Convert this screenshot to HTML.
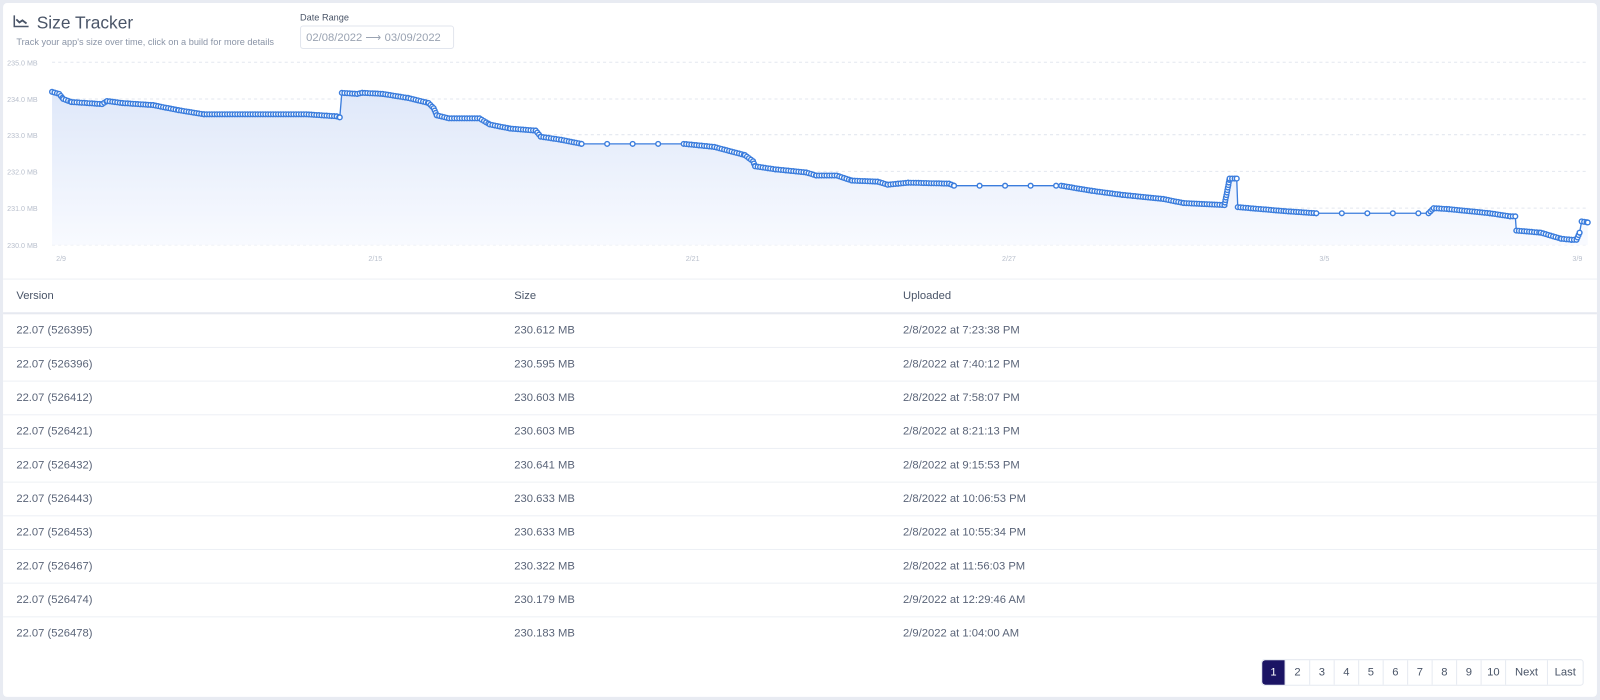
<!DOCTYPE html>
<html><head><meta charset="utf-8"><style>
body{margin:0;background:#e8ebf2;font-family:"Liberation Sans",sans-serif;width:1600px;height:700px;overflow:hidden}
#wrap{position:absolute;left:0;top:0;width:1568px;height:686px;transform:scale(1.0204);transform-origin:0 0}
.card{position:absolute;left:3px;top:3px;width:1562px;height:680px;background:#fff;border-radius:4px}
.title{position:absolute;left:33px;top:10px;font-size:17px;color:#4a5568}
.sub{position:absolute;left:13px;top:33px;font-size:9px;color:#8a94a6}
.dr{position:absolute;left:291px;top:9px;font-size:9px;color:#4a5568}
.inp{position:absolute;left:291px;top:22px;width:151px;height:23px;border:1px solid #e2e6ee;border-radius:3px;font-size:11px;color:#9aa3b2;line-height:22px;box-sizing:border-box;padding-left:5px;white-space:nowrap;overflow:hidden}
.tbl{position:absolute;left:3px;top:273px;width:1562px}
.row{height:32px;border-bottom:1px solid #edf0f5;position:relative;font-size:11px;color:#5a6478}
.row span{position:absolute;top:10px}
.hd{height:32px;border-top:1px solid #edf0f5;border-bottom:2px solid #e6e9f0;color:#4a5568}
.pg{position:absolute;top:646px;left:1236px;display:flex;border:1px solid #e6eaf1;border-radius:3px;font-size:11px;color:#4a5568}
.pg div{height:24px;line-height:24px;text-align:center;border-left:1px solid #e6eaf1;width:23px}
.pg div:first-child{border:none;background:#1b1464;color:#fff;width:22px;border-radius:3px 0 0 3px}
</style></head><body>
<div id="wrap">
<div class="card">
<svg style="position:absolute;left:10px;top:12px" width="16" height="12" viewBox="0 0 16 12"><path d="M1 0V11H15" stroke="#4a5568" stroke-width="1.5" fill="none"/><path d="M3 4L6 7L9 5L13 8" stroke="#4a5568" stroke-width="1.8" fill="none"/></svg>
<div class="title">Size Tracker</div>
<div class="sub">Track your app's size over time, click on a build for more details</div>
<div class="dr">Date Range</div>
<div class="inp">02/08/2022 ⟶ 03/09/2022</div>
</div>
<svg id="ch" style="position:absolute;left:0;top:0" width="1568" height="270">
<defs><linearGradient id="g" x1="0" y1="0" x2="0" y2="1"><stop offset="0" stop-color="#dfe8f9"/><stop offset="1" stop-color="#f8faff"/></linearGradient></defs>
<g font-size="7" fill="#b8bfcc" font-family="Liberation Sans">
<text x="7" y="64">235.0 MB</text><text x="7" y="100">234.0 MB</text><text x="7" y="135">233.0 MB</text><text x="7" y="171">232.0 MB</text><text x="7" y="207">231.0 MB</text><text x="7" y="243">230.0 MB</text>
<text x="55" y="256">2/9</text><text x="361" y="256">2/15</text><text x="672" y="256">2/21</text><text x="982" y="256">2/27</text><text x="1293" y="256">3/5</text><text x="1541" y="256">3/9</text>
</g>
<g stroke="#e3e7ef" stroke-dasharray="3,3" stroke-width="1">
<line x1="51" x2="1555" y1="61" y2="61"/><line x1="51" x2="1555" y1="97" y2="97"/><line x1="51" x2="1555" y1="132" y2="132"/><line x1="51" x2="1555" y1="168" y2="168"/><line x1="51" x2="1555" y1="204" y2="204"/><line x1="51" x2="1555" y1="240" y2="240"/>
</g>
<path id="area" fill="url(#g)"/><polyline id="ln" fill="none" stroke="#3b7ddd" stroke-width="1.3"/><g id="dots"></g>
</svg>
<div class="tbl">
<div class="row hd"><span style="left:13px">Version</span><span style="left:501px">Size</span><span style="left:882px">Uploaded</span></div>
<div class="row"><span style="left:13px">22.07 (526395)</span><span style="left:501px">230.612 MB</span><span style="left:882px">2/8/2022 at 7:23:38 PM</span></div>
<div class="row"><span style="left:13px">22.07 (526396)</span><span style="left:501px">230.595 MB</span><span style="left:882px">2/8/2022 at 7:40:12 PM</span></div>
<div class="row"><span style="left:13px">22.07 (526412)</span><span style="left:501px">230.603 MB</span><span style="left:882px">2/8/2022 at 7:58:07 PM</span></div>
<div class="row"><span style="left:13px">22.07 (526421)</span><span style="left:501px">230.603 MB</span><span style="left:882px">2/8/2022 at 8:21:13 PM</span></div>
<div class="row"><span style="left:13px">22.07 (526432)</span><span style="left:501px">230.641 MB</span><span style="left:882px">2/8/2022 at 9:15:53 PM</span></div>
<div class="row"><span style="left:13px">22.07 (526443)</span><span style="left:501px">230.633 MB</span><span style="left:882px">2/8/2022 at 10:06:53 PM</span></div>
<div class="row"><span style="left:13px">22.07 (526453)</span><span style="left:501px">230.633 MB</span><span style="left:882px">2/8/2022 at 10:55:34 PM</span></div>
<div class="row"><span style="left:13px">22.07 (526467)</span><span style="left:501px">230.322 MB</span><span style="left:882px">2/8/2022 at 11:56:03 PM</span></div>
<div class="row"><span style="left:13px">22.07 (526474)</span><span style="left:501px">230.179 MB</span><span style="left:882px">2/9/2022 at 12:29:46 AM</span></div>
<div class="row" style="border:none"><span style="left:13px">22.07 (526478)</span><span style="left:501px">230.183 MB</span><span style="left:882px">2/9/2022 at 1:04:00 AM</span></div>
</div>
<div class="pg"><div>1</div><div>2</div><div>3</div><div>4</div><div>5</div><div>6</div><div>7</div><div>8</div><div>9</div><div>10</div><div style="width:40px">Next</div><div style="width:34px">Last</div></div>
</div>
<script>
var P=[[51,90],[58,92],[62,97],[70,100],[100,102],[105,99],[120,101],[150,103],[175,108],[200,112],[240,112],[300,112],[330,114],[333,115],[335,91],[350,92],[355,91],[375,92],[400,96],[420,101],[425,106],[428,113],[440,116],[470,116],[480,122],[500,126],[525,128],[530,134],[550,137],[570,141],[670,141],[700,144],[730,152],[738,158],[740,163],[760,166],[790,169],[800,172],[820,172],[835,177],[860,178],[870,181],[880,180],[890,179],[930,180],[935,182],[1040,182],[1070,187],[1100,191],[1140,195],[1160,199],[1200,201],[1205,175],[1212,175],[1213,203],[1260,207],[1290,209],[1400,209],[1405,204],[1420,205],[1460,209],[1480,212],[1485,212],[1486,226],[1510,228],[1530,234],[1540,235],[1545,235],[1548,228],[1550,217],[1556,218]];
var s=P.map(p=>p.join(',')).join(' ');
document.getElementById('ln').setAttribute('points',s);
document.getElementById('area').setAttribute('d','M'+P.map(p=>p.join(',')).join('L')+'L1556,240L51,240Z');
var h='';
for(var i=0;i<P.length-1;i++){var a=P[i],b=P[i+1],d=Math.hypot(b[0]-a[0],b[1]-a[1]);if(Math.abs(b[1]-a[1])>8&&Math.abs(b[0]-a[0])<4){h+='<circle cx="'+a[0]+'" cy="'+a[1]+'" r="2.3"/>';continue;}var st=(d>60)?25:2.5;for(var t=0;t<d;t+=st){var x=a[0]+(b[0]-a[0])*t/d,y=a[1]+(b[1]-a[1])*t/d;h+='<circle cx="'+x.toFixed(1)+'" cy="'+y.toFixed(1)+'" r="2.3"/>';}}
h+='<circle cx="1556" cy="218" r="2.3"/>';
var g=document.getElementById('dots');g.setAttribute('fill','#fff');g.setAttribute('stroke','#3b7ddd');g.setAttribute('stroke-width','1.4');g.innerHTML=h;
</script>
</body></html>
